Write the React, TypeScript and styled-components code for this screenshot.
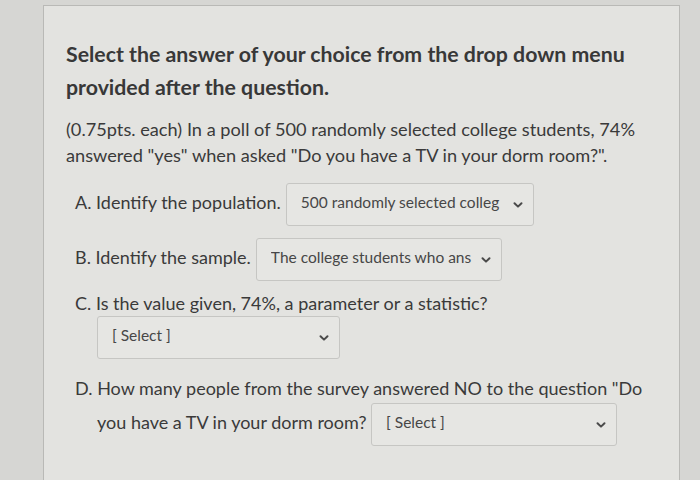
import React from "react";
import styled, { createGlobalStyle } from "styled-components";

const GlobalStyle = createGlobalStyle`
  html, body {
    margin: 0;
    padding: 0;
    background: #d6d6d3;
    font-family: Lato, "Open Sans", "Liberation Sans", sans-serif;
    color: #3a3a3a;
  }
`;

const Page = styled.div`
  width: 700px;
  height: 480px;
  overflow: hidden;
  padding: 5px 20px 0 43px;
  box-sizing: border-box;
`;

const Card = styled.div`
  background: #e3e3e0;
  border: 1px solid #b9b9b6;
  border-bottom: none;
  height: 100%;
  box-sizing: border-box;
  padding: 32px 20px 0 22px;
`;

const Title = styled.h2`
  margin: 0 0 12px;
  font-size: 21.3px;
  font-weight: 700;
  line-height: 33px;
  color: #383838;
`;

const Intro = styled.p`
  margin: 0 0 15px;
  font-size: 18.2px;
  line-height: 26px;
`;

const Item = styled.div<{ gap?: number }>`
  font-size: 18px;
  line-height: 30px;
  margin: 0 0 ${(p) => p.gap ?? 9}px 9px;
  padding-left: 22px;
  text-indent: -22px;
`;

const Label = styled.span`
  margin-right: 5px;
`;

const Question = styled.div`
  line-height: 26px;
`;

const SelectBox = styled.span<{ width: number }>`
  display: inline-flex;
  align-items: center;
  justify-content: space-between;
  vertical-align: middle;
  text-indent: 0;
  width: ${(p) => p.width}px;
  height: 43px;
  box-sizing: border-box;
  padding: 0 10px 0 14px;
  border: 1px solid #c6c6c3;
  border-radius: 3px;
  background: #e6e6e3;
  font-size: 15.5px;
  color: #474747;
  line-height: 1;
`;

const Value = styled.span`
  white-space: nowrap;
  overflow: hidden;
  flex: 1;
  line-height: 1.4;
  padding-bottom: 3px;
`;

const Block = styled.div`
  text-indent: 0;
  line-height: 0;
`;

const Chevron = () => (
  <svg width="10" height="8" viewBox="0 0 10 8" style={{ flexShrink: 0 }}>
    <path d="M1.5 2.2 L5 5.6 L8.5 2.2" fill="none" stroke="#4a4a4a" strokeWidth="2" strokeLinecap="round" strokeLinejoin="round" />
  </svg>
);

const Select = ({ value, width }: { value: string; width: number }) => (
  <SelectBox width={width}>
    <Value>{value}</Value>
    <Chevron />
  </SelectBox>
);

export default function App() {
  return (
    <>
      <GlobalStyle />
      <Page>
        <Card>
          <Title>
            Select the answer of your choice from the drop down menu
            <br />
            provided after the question.
          </Title>
          <Intro>
            (0.75pts. each) In a poll of 500 randomly selected college students, 74%
            <br />
            answered "yes" when asked "Do you have a TV in your dorm room?".
          </Intro>
          <Item gap={12}>
            <Label>A. Identify the population.</Label>
            <Select value="500 randomly selected colleg" width={248} />
          </Item>
          <Item gap={9}>
            <Label>B. Identify the sample.</Label>
            <Select value="The college students who ans" width={246} />
          </Item>
          <Item gap={14}>
            <Question>C. Is the value given, 74%, a parameter or a statistic?</Question>
            <Block>
              <Select value="[ Select ]" width={243} />
            </Block>
          </Item>
          <Item>
            D. How many people from the survey answered NO to the question "Do
            <br />
            you have a TV in your dorm room?{" "}
            <Select value="[ Select ]" width={246} />
          </Item>
        </Card>
      </Page>
    </>
  );
}
